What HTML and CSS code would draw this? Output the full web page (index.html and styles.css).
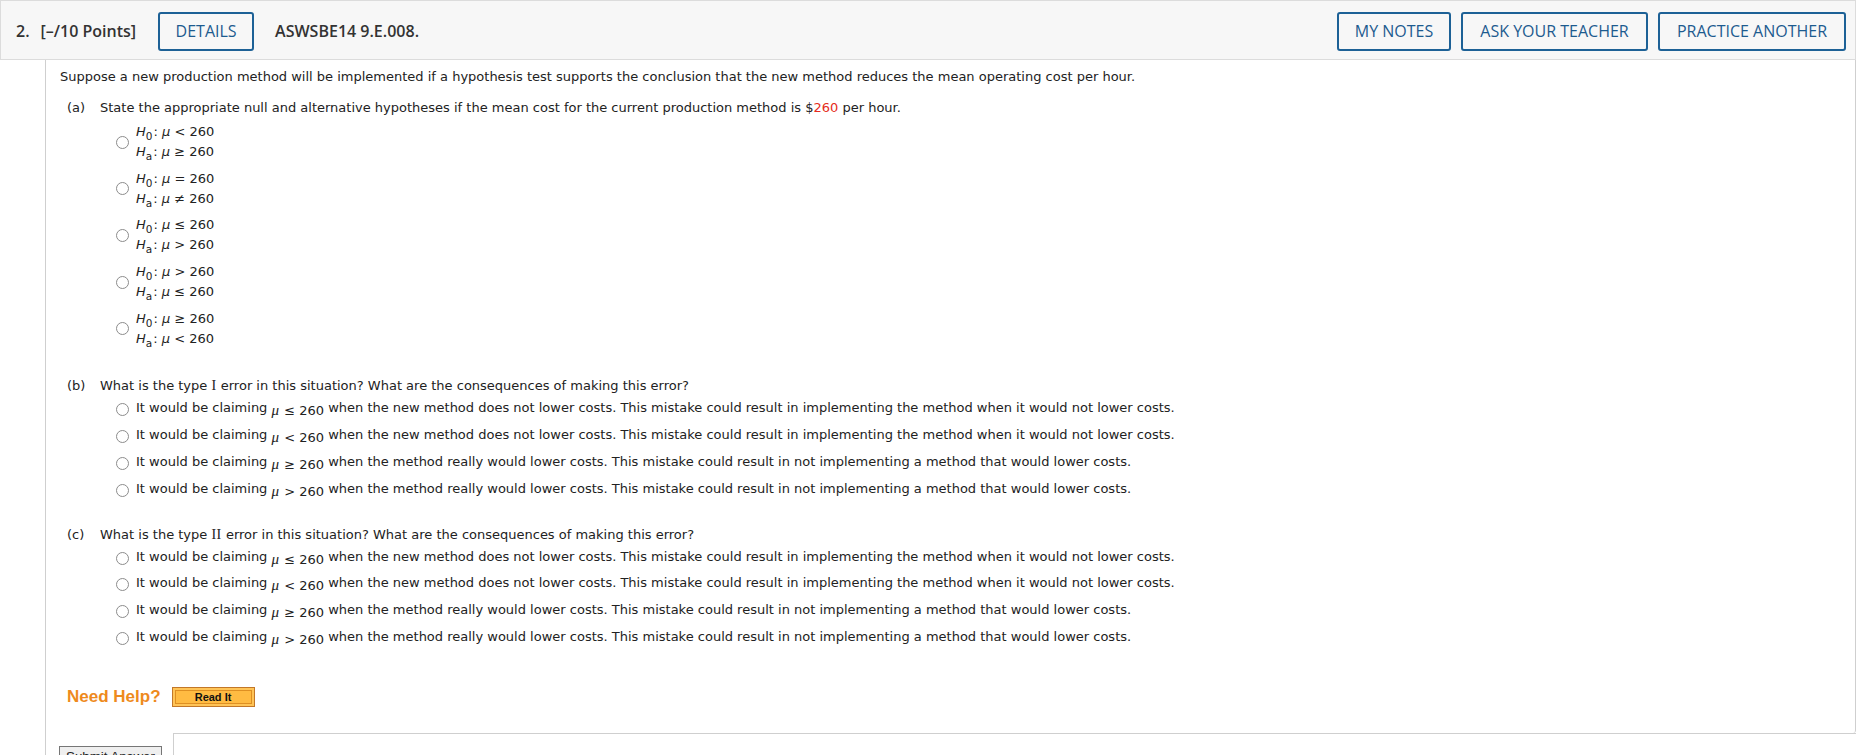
FILE: index.html
```html
<!DOCTYPE html>
<html>
<head>
<meta charset="utf-8">
<title>Question 2</title>
<link rel="stylesheet" href="styles.css">
</head>
<body>
<div class="question">
  <div class="qhead">
    <span class="qnum">2.</span>
    <span class="qpts">[–/10 Points]</span>
    <button class="hbtn details">DETAILS</button>
    <span class="qcode">ASWSBE14 9.E.008.</span>
    <div class="hright">
      <button class="hbtn w-notes">MY NOTES</button>
      <button class="hbtn w-ask">ASK YOUR TEACHER</button>
      <button class="hbtn w-practice">PRACTICE ANOTHER</button>
    </div>
  </div>
  <div class="qwrap">
    <div class="qbody">
      <p class="intro">Suppose a new production method will be implemented if a hypothesis test supports the conclusion that the new method reduces the mean operating cost per hour.</p>

      <div class="part part-a">
        <div class="ptitle"><span class="plabel">(a)</span><span>State the appropriate null and alternative hypotheses if the mean cost for the current production method is $<span class="red">260</span> per hour.</span></div>
        <div class="hyps">
          <label class="hyp"><input type="radio" name="a"><span class="hlines"><span class="hl"><i>H</i><sub>0</sub>: <i>μ</i> &lt; 260</span><span class="hl"><i>H</i><sub>a</sub>: <i>μ</i> ≥ 260</span></span></label>
          <label class="hyp"><input type="radio" name="a"><span class="hlines"><span class="hl"><i>H</i><sub>0</sub>: <i>μ</i> = 260</span><span class="hl"><i>H</i><sub>a</sub>: <i>μ</i> ≠ 260</span></span></label>
          <label class="hyp"><input type="radio" name="a"><span class="hlines"><span class="hl"><i>H</i><sub>0</sub>: <i>μ</i> ≤ 260</span><span class="hl"><i>H</i><sub>a</sub>: <i>μ</i> &gt; 260</span></span></label>
          <label class="hyp"><input type="radio" name="a"><span class="hlines"><span class="hl"><i>H</i><sub>0</sub>: <i>μ</i> &gt; 260</span><span class="hl"><i>H</i><sub>a</sub>: <i>μ</i> ≤ 260</span></span></label>
          <label class="hyp"><input type="radio" name="a"><span class="hlines"><span class="hl"><i>H</i><sub>0</sub>: <i>μ</i> ≥ 260</span><span class="hl"><i>H</i><sub>a</sub>: <i>μ</i> &lt; 260</span></span></label>
        </div>
      </div>

      <div class="part part-b">
        <div class="ptitle"><span class="plabel">(b)</span><span>What is the type <span class="roman">I</span> error in this situation? What are the consequences of making this error?</span></div>
        <div class="opts">
          <label class="opt"><input type="radio" name="b"><span>It would be claiming <span class="m"><i>μ</i> ≤ 260</span> when the new method does not lower costs. This mistake could result in implementing the method when it would not lower costs.</span></label>
          <label class="opt"><input type="radio" name="b"><span>It would be claiming <span class="m"><i>μ</i> &lt; 260</span> when the new method does not lower costs. This mistake could result in implementing the method when it would not lower costs.</span></label>
          <label class="opt"><input type="radio" name="b"><span>It would be claiming <span class="m"><i>μ</i> ≥ 260</span> when the method really would lower costs. This mistake could result in not implementing a method that would lower costs.</span></label>
          <label class="opt"><input type="radio" name="b"><span>It would be claiming <span class="m"><i>μ</i> &gt; 260</span> when the method really would lower costs. This mistake could result in not implementing a method that would lower costs.</span></label>
        </div>
      </div>

      <div class="part part-c">
        <div class="ptitle"><span class="plabel">(c)</span><span>What is the type <span class="roman">II</span> error in this situation? What are the consequences of making this error?</span></div>
        <div class="opts">
          <label class="opt"><input type="radio" name="c"><span>It would be claiming <span class="m"><i>μ</i> ≤ 260</span> when the new method does not lower costs. This mistake could result in implementing the method when it would not lower costs.</span></label>
          <label class="opt"><input type="radio" name="c"><span>It would be claiming <span class="m"><i>μ</i> &lt; 260</span> when the new method does not lower costs. This mistake could result in implementing the method when it would not lower costs.</span></label>
          <label class="opt"><input type="radio" name="c"><span>It would be claiming <span class="m"><i>μ</i> ≥ 260</span> when the method really would lower costs. This mistake could result in not implementing a method that would lower costs.</span></label>
          <label class="opt"><input type="radio" name="c"><span>It would be claiming <span class="m"><i>μ</i> &gt; 260</span> when the method really would lower costs. This mistake could result in not implementing a method that would lower costs.</span></label>
        </div>
      </div>

      <div class="help">
        <span class="help-label">Need Help?</span>
        <button class="readit"><span>Read It</span></button>
      </div>
    </div>
    <div class="qfoot">
      <div class="submit-col"><button class="submit">Submit Answer</button></div>
      <div class="resp-box"></div>
    </div>
  </div>
</div>
</body>
</html>
```

FILE: styles.css
```css
* { box-sizing: border-box; }
html, body { margin: 0; padding: 0; background: #fff; }
body {
  width: 1868px;
  height: 755px;
  overflow: hidden;
  font-family: "DejaVu Sans", Verdana, sans-serif;
  font-size: 13px;
  color: #222;
}

.question { width: 1856px; }

/* header */
.qhead {
  height: 60px;
  border: 1px solid #dcdcdc;
  background: #f7f7f7;
  display: flex;
  align-items: center;
  padding: 2px 9px 0 15px;
  font-family: "Open Sans", sans-serif;
  color: #333;
}
.qnum, .qpts, .qcode { font-weight: 600; font-size: 16px; }
.qpts { margin-left: 11px; }
.qcode { margin-left: 21px; }
.hbtn {
  font-family: "Open Sans", sans-serif;
  font-size: 16px;
  color: #1d5b8f;
  background: transparent;
  border: 2px solid #1d6196;
  border-radius: 3px;
  height: 39px;
  padding: 0;
  margin: 0;
  line-height: 35px;
  text-align: center;
}
.details { margin-left: 22px; width: 96px; }
.w-notes { width: 114px; }
.w-ask { width: 187px; }
.w-practice { width: 188px; }
.hright { margin-left: auto; display: flex; gap: 10px; }

/* body */
.qwrap { margin-left: 45px; border-left: 1px solid #cfcfcf; }
.qbody {
  border-right: 1px solid #cfcfcf;
  border-bottom-right-radius: 3px;
  padding: 8px 0 26px 14px;
}
.intro { margin: 0; line-height: 18px; }

.part { margin-left: 7px; }
.part-a { margin-top: 13px; }
.part-b { margin-top: 27.2px; }
.part-c { margin-top: 21.1px; }
.ptitle { display: flex; line-height: 18px; }
.part-b .ptitle, .part-c .ptitle { line-height: 20px; }
.plabel { width: 33px; flex: none; }
.red { color: #e52b20; }
.roman { font-family: "Liberation Serif", serif; font-size: 14px; letter-spacing: 0.5px; }

input[type="radio"] {
  -webkit-appearance: none;
  appearance: none;
  width: 13px;
  height: 13px;
  margin: 0;
  border: 1px solid #8c8c8c;
  border-radius: 50%;
  background: #fff;
  flex: none;
}

.hyps {
  margin: 5px 0 0 48.5px;
  display: flex;
  flex-direction: column;
  gap: 6.7px;
}
.hyp { display: flex; align-items: center; height: 40px; }
.hyp input { margin-right: 7.5px; }
.hlines { display: flex; flex-direction: column; }
.hl { line-height: 20px; white-space: nowrap; }
.hl sub { font-size: 10.5px; vertical-align: -4px; line-height: 0; font-style: normal; margin: 0 1px 0 0; }
.hl i { font-style: italic; }

.opts { margin-left: 48.5px; }
.opt { display: flex; align-items: center; height: 26.9px; white-space: nowrap; }
.opt input { margin-right: 7.5px; }
.m { display: inline-block; vertical-align: -3px; }
.m i { font-family: "Liberation Serif", serif; font-size: 15px; font-style: italic; margin-right: 1px; }

/* help */
.help { display: flex; align-items: center; margin: 34.7px 0 0 7px; }
.help-label {
  font-family: "Liberation Sans", Arial, sans-serif;
  font-weight: bold;
  font-size: 17px;
  color: #ee8a1d;
}
.readit {
  margin: 0 0 0 11px;
  width: 83px;
  height: 20px;
  padding: 0;
  border: 1px solid #c27728;
  background: #ffbb42;
  display: flex;
  align-items: center;
  justify-content: center;
  box-shadow: inset 0 0 0 2px #ffc457, inset 0 0 0 3px #de8f22;
  font-family: "Liberation Sans", Arial, sans-serif;
  font-weight: bold;
  font-size: 11px;
  color: #111;
}

/* footer */
.qfoot { display: flex; }
.submit-col { width: 127px; flex: none; padding: 13px 0 0 13px; }
.submit {
  margin: 0;
  font-family: "Liberation Sans", Arial, sans-serif;
  font-size: 13.33px;
  color: #222;
  background: #efefef;
  border: 1px solid #767676;
  padding: 1px 6px;
  height: 22px;
  white-space: nowrap;
}
.resp-box {
  flex: 1;
  height: 40px;
  border-top: 1px solid #cfcfcf;
  border-left: 1px solid #cfcfcf;
}
```
